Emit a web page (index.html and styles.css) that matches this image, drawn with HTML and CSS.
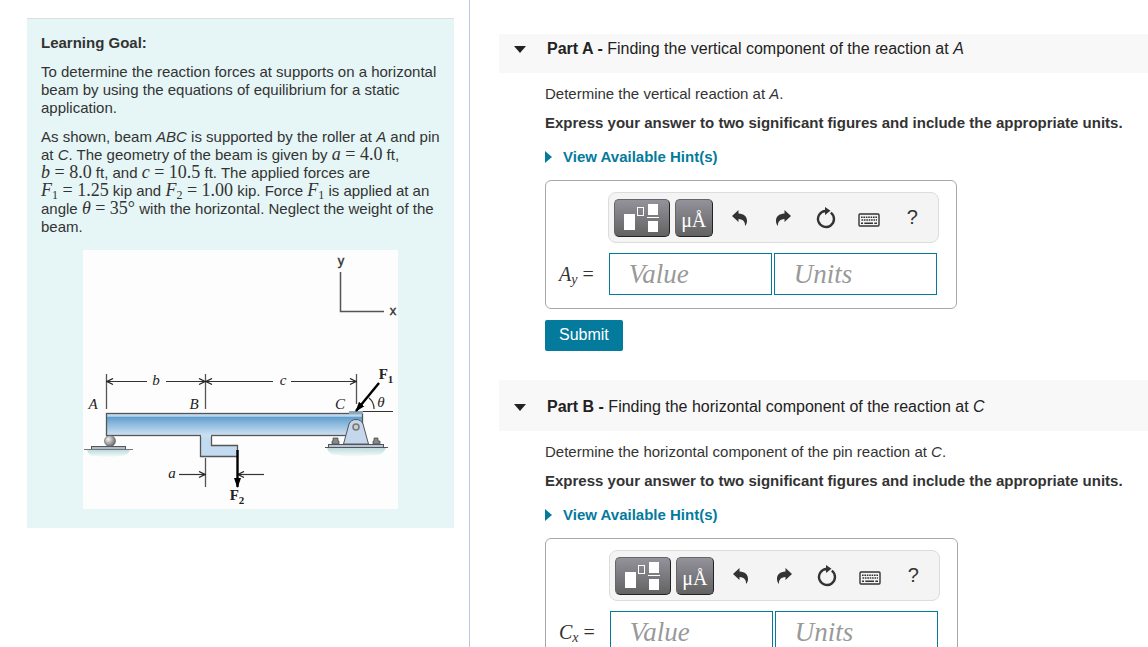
FILE: index.html
```html
<!DOCTYPE html>
<html lang="en">
<head>
    <meta charset="UTF-8">
    <meta name="viewport" content="width=device-width, initial-scale=1.0">
    <title>Reactions on a Horizontal Beam</title>
    <link rel="stylesheet" href="styles.css">
</head>
<body>
    <!-- Shared icons -->
    <svg class="icon-defs" aria-hidden="true">
        <symbol id="icon-undo" viewBox="0 0 16 16">
            <path d="M0 6 L6.5 0 V3.6 C12 3.8 15.2 7 15 11 C15 13 14.3 14.8 13 16 C13.4 12.3 11.5 9.2 6.5 9 V12 Z"/>
        </symbol>
        <symbol id="icon-redo" viewBox="0 0 16 16">
            <path d="M16 6 L9.5 0 V3.6 C4 3.8 .8 7 1 11 C1 13 1.7 14.8 3 16 C2.6 12.3 4.5 9.2 9.5 9 V12 Z"/>
        </symbol>
        <symbol id="icon-reset" viewBox="0 0 20 22">
            <path d="M14.8 5.6 A8 8 0 1 1 9.5 4" fill="none" stroke="currentColor" stroke-width="2.4"/>
            <path d="M9 0 L14.5 3.8 L9 8 Z"/>
        </symbol>
        <symbol id="icon-keyboard" viewBox="0 0 22 14">
            <rect x="1" y="1" width="20" height="12" rx="1" fill="none" stroke="currentColor" stroke-width="1.4"/>
            <path d="M3 4.2 H19 M3.5 7 H19" stroke="currentColor" stroke-width="1.6" stroke-dasharray="1.6 .8" fill="none"/>
            <path d="M3 10.2 H5 M6.3 10.2 H15 M16.3 10.2 H19" stroke="currentColor" stroke-width="1.5" fill="none"/>
        </symbol>
        <symbol id="icon-template" viewBox="0 0 36 30">
            <rect x="0" y="11" width="11" height="16" fill="#fff"/>
            <rect x="13.5" y="4.5" width="6" height="8" fill="none" stroke="#fff"/>
            <rect x="24" y="1" width="10" height="11" fill="#fff"/>
            <rect x="23" y="14" width="12" height="1" fill="#fff"/>
            <rect x="24" y="18" width="10" height="11" fill="#fff"/>
        </symbol>
    </svg>

    <div class="page">
        <!-- Problem statement -->
        <aside class="problem">
            <div class="goal">
                <p><strong>Learning Goal:</strong></p>
                <p>To determine the reaction forces at supports on a horizontal beam by using the equations of equilibrium for a static application.</p>
                <p>As shown, beam <i>ABC</i> is supported by the roller at <i>A</i> and pin at <i>C</i>. The geometry of the beam is given by <span class="math"><i>a</i> = 4.0</span> ft, <span class="math"><i>b</i> = 8.0</span> ft, and <span class="math"><i>c</i> = 10.5</span> ft. The applied forces are <span class="math"><i>F</i><sub>1</sub> = 1.25</span> kip and <span class="math"><i>F</i><sub>2</sub> = 1.00</span> kip. Force <span class="math"><i>F</i><sub>1</sub></span> is applied at an angle <span class="math"><i>θ</i> = 35°</span> with the horizontal. Neglect the weight of the beam.</p>

                <svg class="figure" viewBox="0 0 315 259" role="img" aria-label="Beam ABC with forces F1 and F2">
                    <defs>
                        <linearGradient id="beam" x1="0" y1="0" x2="0" y2="1">
                            <stop offset="0" stop-color="#c9dff0"/>
                            <stop offset=".13" stop-color="#b5d3eb"/>
                            <stop offset=".16" stop-color="#5f9dcb"/>
                            <stop offset=".5" stop-color="#90bcdf"/>
                            <stop offset="1" stop-color="#cfe1f2"/>
                        </linearGradient>
                        <linearGradient id="ground" x1="0" y1="0" x2="0" y2="1">
                            <stop offset="0" stop-color="#bcdcdc"/>
                            <stop offset="1" stop-color="#fdfdfd"/>
                        </linearGradient>
                        <radialGradient id="ball" cx=".35" cy=".35" r=".7">
                            <stop offset="0" stop-color="#f2f2f2"/>
                            <stop offset="1" stop-color="#666"/>
                        </radialGradient>
                        <marker id="tip" viewBox="0 0 8 8" refX="7" refY="4" markerWidth="8" markerHeight="8" markerUnits="userSpaceOnUse" orient="auto-start-reverse">
                            <path d="M1 1 L7 4 L1 7" fill="none" stroke="#222" stroke-width="1.3"/>
                        </marker>
                        <marker id="force" viewBox="0 0 10 8" refX="9" refY="4" markerWidth="10" markerHeight="8" markerUnits="userSpaceOnUse" orient="auto">
                            <path d="M0 0.5 L10 4 L0 7.5 Z" fill="#000"/>
                        </marker>
                    </defs>
                    <rect width="315" height="259" fill="#fdfdfd"/>

                    <!-- axes -->
                    <path d="M257.5 22 V61.5 H301" fill="none" stroke="#555" stroke-width="1.5"/>
                    <text class="axis" x="258" y="15">y</text>
                    <text class="axis" x="310" y="65">x</text>

                    <!-- ground shading under the supports -->
                    <path d="M4 200 H47 Q44 207 34 206 Q24 209 16 206 Q6 208 4 200 Z" fill="url(#ground)"/>
                    <path d="M244 198 H303 Q300 207 286 205 Q268 209 256 205 Q246 206 244 198 Z" fill="url(#ground)"/>

                    <!-- beam and bracket -->
                    <rect x="23.5" y="163.5" width="256" height="22" fill="url(#beam)" stroke="#555" stroke-width="1.3"/>
                    <path d="M117.5 185.5 V206.5 H154.5 V195.5 H128.5 V185.5" fill="#c3dbf0" stroke="#555" stroke-width="1.3"/>
                    <rect x="118" y="184" width="10" height="3" fill="#c8def1"/>
                    <rect x="266" y="161" width="14" height="3" fill="#8aa9bd"/>

                    <!-- roller at A -->
                    <rect x="8.5" y="196.5" width="34" height="3" fill="#a9bdcf" stroke="#555"/>
                    <path d="M1 199.5 H50" stroke="#777"/>
                    <circle cx="27" cy="191" r="5.5" fill="url(#ball)" stroke="#555" stroke-width=".6"/>

                    <!-- pin at C -->
                    <path d="M249 194 V191 H250 V188 H255 V191 H256 V194 Z M290 194 V191 H291 V188 H295 V191 H297 V194 Z" fill="#888" stroke="#444" stroke-width=".7"/>
                    <path d="M260.5 194 L266 174 Q268 169.5 273 169.5 Q278 169.5 280 174 L285.5 194 Z" fill="#c5d7ed" stroke="#555"/>
                    <rect x="245.5" y="194.5" width="55" height="3" fill="#b4c5dc" stroke="#555"/>
                    <path d="M242 197.5 H305" stroke="#555"/>
                    <circle cx="273" cy="177" r="3" fill="#ccc" stroke="#777" stroke-width="1.5"/>

                    <!-- dimensions -->
                    <path d="M23.5 124 V159 M122.5 124 V159 M273.5 124 V154 M122.5 208 V237" stroke="#555" stroke-width="1.3"/>
                    <g stroke="#333" stroke-width="1.2">
                        <path d="M64 131.5 H24" marker-end="url(#tip)"/>
                        <path d="M83 131.5 H122" marker-end="url(#tip)"/>
                        <path d="M190 131.5 H123" marker-end="url(#tip)"/>
                        <path d="M208 131.5 H273" marker-end="url(#tip)"/>
                        <path d="M96 224.5 H122" marker-end="url(#tip)"/>
                        <path d="M181 224.5 H155" marker-end="url(#tip)"/>
                    </g>
                    <path d="M280 161.5 H310 M286 148 Q291 152 291 159" fill="none" stroke="#333" stroke-width="1.2"/>

                    <!-- forces -->
                    <path d="M296 133 L273 161" stroke="#000" stroke-width="2.4" marker-end="url(#force)"/>
                    <path d="M154.5 200 V237" stroke="#000" stroke-width="2.4" marker-end="url(#force)"/>

                    <text class="dim" x="10" y="159">A</text>
                    <text class="dim" x="111" y="159">B</text>
                    <text class="dim" x="257" y="159">C</text>
                    <text class="dim" x="73" y="135">b</text>
                    <text class="dim" x="200" y="135">c</text>
                    <text class="dim" x="89" y="228">a</text>
                    <text class="dim" x="298" y="157">θ</text>
                    <text class="force" x="303" y="129">F<tspan class="index" dy="4">1</tspan></text>
                    <text class="force" x="154" y="250">F<tspan class="index" dy="4">2</tspan></text>
                </svg>
            </div>
        </aside>

        <!-- Question parts -->
        <main class="parts">
            <section class="part">
                <header class="part-header">
                    <button class="toggle" type="button" aria-label="Collapse Part A"></button>
                    <h2><b>Part A -</b> Finding the vertical component of the reaction at <i>A</i></h2>
                </header>
                <div class="part-body">
                    <p>Determine the vertical reaction at <i>A</i>.</p>
                    <p><strong>Express your answer to two significant figures and include the appropriate units.</strong></p>
                    <a class="hints" href="#hints-a">View Available Hint(s)</a>
                    <form class="part-form">
                        <div class="answer">
                            <div class="toolbar">
                                <button class="tool-dark template" type="button" aria-label="Templates"><svg><use href="#icon-template"/></svg></button>
                                <button class="tool-dark units" type="button" aria-label="Symbols">μÅ</button>
                                <button class="tool" type="button" aria-label="Undo"><svg class="arrow"><use href="#icon-undo"/></svg></button>
                                <button class="tool" type="button" aria-label="Redo"><svg class="arrow"><use href="#icon-redo"/></svg></button>
                                <button class="tool" type="button" aria-label="Reset"><svg class="reset"><use href="#icon-reset"/></svg></button>
                                <button class="tool" type="button" aria-label="Keyboard shortcuts"><svg class="keyboard"><use href="#icon-keyboard"/></svg></button>
                                <button class="tool" type="button" aria-label="Help">?</button>
                            </div>
                            <label class="math" for="value-a"><i>A<sub>y</sub></i> =</label>
                            <div class="fields">
                                <input id="value-a" type="text" placeholder="Value">
                                <input type="text" placeholder="Units" aria-label="Units">
                            </div>
                        </div>
                        <button class="submit" type="submit">Submit</button>
                    </form>
                </div>
            </section>

            <section class="part">
                <header class="part-header">
                    <button class="toggle" type="button" aria-label="Collapse Part B"></button>
                    <h2><b>Part B -</b> Finding the horizontal component of the reaction at <i>C</i></h2>
                </header>
                <div class="part-body">
                    <p>Determine the horizontal component of the pin reaction at <i>C</i>.</p>
                    <p><strong>Express your answer to two significant figures and include the appropriate units.</strong></p>
                    <a class="hints" href="#hints-b">View Available Hint(s)</a>
                    <form class="part-form">
                        <div class="answer">
                            <div class="toolbar">
                                <button class="tool-dark template" type="button" aria-label="Templates"><svg><use href="#icon-template"/></svg></button>
                                <button class="tool-dark units" type="button" aria-label="Symbols">μÅ</button>
                                <button class="tool" type="button" aria-label="Undo"><svg class="arrow"><use href="#icon-undo"/></svg></button>
                                <button class="tool" type="button" aria-label="Redo"><svg class="arrow"><use href="#icon-redo"/></svg></button>
                                <button class="tool" type="button" aria-label="Reset"><svg class="reset"><use href="#icon-reset"/></svg></button>
                                <button class="tool" type="button" aria-label="Keyboard shortcuts"><svg class="keyboard"><use href="#icon-keyboard"/></svg></button>
                                <button class="tool" type="button" aria-label="Help">?</button>
                            </div>
                            <label class="math" for="value-b"><i>C<sub>x</sub></i> =</label>
                            <div class="fields">
                                <input id="value-b" type="text" placeholder="Value">
                                <input type="text" placeholder="Units" aria-label="Units">
                            </div>
                        </div>
                        <button class="submit" type="submit">Submit</button>
                    </form>
                </div>
            </section>
        </main>
    </div>
</body>
</html>
```
FILE: styles.css
```css
* {
    box-sizing: border-box;
}
body {
    margin: 0;
    font-family: "Liberation Sans", Arial, sans-serif;
    font-size: 15px;
    line-height: 18px;
    color: #333;
    background: white;
}
p {
    margin: 0 0 11px;
}
.icon-defs {
    position: absolute;
    width: 0;
    height: 0;
}
.page {
    display: grid;
    grid-template-columns: 470px 1fr;
    height: 100vh;
}
.problem,
.parts {
    overflow-y: auto;
    scrollbar-width: none;
}

/* Problem statement */
.problem {
    padding: 18px 15px 18px 27px;
    border-right: 1px solid #b9c6dc;
}
.goal {
    padding: 15px 13px 19px 14px;
    background: #e6f6f6;
    border-top: 1px solid #dcdfe0;
}
.math {
    font-family: "Liberation Serif", "Times New Roman", serif;
    font-size: 18px;
    line-height: 0;
    white-space: nowrap;
}
.math sub {
    font-size: 12px;
    line-height: 0;
    vertical-align: -3px;
}
.figure {
    display: block;
    width: 315px;
    margin: 14px 0 0 42px;
}
.axis {
    font-size: 13px;
    text-anchor: middle;
    fill: #333;
    stroke: #333;
    stroke-width: .4px;
}
.dim,
.force {
    font-family: "Liberation Serif", "Times New Roman", serif;
    font-size: 15px;
    text-anchor: middle;
    fill: #222;
}
.dim {
    font-style: italic;
}
.force {
    font-weight: bold;
}
.index {
    font-size: 11px;
}

/* Parts */
.parts {
    padding: 34px 0 0 29px;
}
.part {
    margin-bottom: 29px;
}
.part-header {
    display: flex;
    align-items: center;
    gap: 20px;
    padding: 18px 14px 15px;
    background: #f8f8f8;
}
.part:first-child .part-header {
    padding-top: 6px;
}
.part-header h2 {
    margin: 0;
    font-size: 16px;
    font-weight: normal;
    color: #222;
}
.toggle {
    width: 14px;
    height: 18px;
    padding: 0 1px;
    border: none;
    background: none;
}
.toggle::before {
    content: "";
    display: block;
    border: 6px solid transparent;
    border-top: 7px solid #222;
    border-bottom: none;
}
.part-body {
    padding: 12px 14px 0 46px;
}
.hints {
    display: flex;
    align-items: center;
    gap: 11px;
    margin-top: 16px;
    font-weight: bold;
    color: #047a9c;
    text-decoration: none;
}
.hints::before {
    content: "";
    border: 6px solid transparent;
    border-left: 7px solid #047a9c;
    border-right: none;
}
.part-form {
    display: flex;
    flex-direction: column;
    align-items: flex-start;
    gap: 11px;
    margin-top: 14px;
}
.answer {
    display: grid;
    grid-template-columns: auto auto;
    align-items: center;
    row-gap: 10px;
    padding: 11px 19px 13px 13px;
    border: 1px solid #a8a8a8;
    border-radius: 6px;
}
.answer label {
    padding-right: 15px;
    font-size: 20px;
    line-height: 24px;
}
.answer sub {
    font-size: 14px;
}
.toolbar {
    grid-column: 2;
    display: flex;
    align-items: center;
    margin: 0 -2px 0 -1px;
    height: 51px;
    padding: 0 4px 0 5px;
    background: #f4f4f4;
    border: 1px solid #dcdcdc;
    border-radius: 8px;
}
.tool-dark {
    display: flex;
    align-items: center;
    justify-content: center;
    height: 38px;
    margin-right: 5px;
    padding: 0;
    color: white;
    background: linear-gradient(#94929b, #626262);
    border: 1px solid #222;
    border-top-color: #666;
    border-left-color: #666;
    border-radius: 5px;
}
.template {
    width: 56px;
}
.template svg {
    width: 36px;
    height: 30px;
}
.units {
    width: 38px;
    margin-right: 6px;
    padding-top: 6px;
    font-family: "Liberation Serif", "Times New Roman", serif;
    font-size: 20px;
}
.tool {
    display: flex;
    flex: 1;
    align-items: center;
    justify-content: center;
    padding: 0;
    font-family: "Liberation Sans", Arial, sans-serif;
    font-size: 20px;
    color: #333;
    background: none;
    border: none;
}
.tool svg {
    fill: #333;
}
.arrow {
    width: 16px;
    height: 16px;
}
.reset {
    width: 20px;
    height: 22px;
}
.keyboard {
    width: 22px;
    height: 14px;
    margin-top: 4px;
}
.fields {
    display: flex;
    gap: 2px;
}
.fields input {
    width: 163px;
    height: 42px;
    padding: 0 19px;
    font-family: "Liberation Serif", "Times New Roman", serif;
    font-size: 27px;
    font-style: italic;
    border: 1px solid #047a9c;
    border-radius: 0;
}
.fields input::placeholder {
    color: #999;
}
.submit {
    height: 31px;
    padding: 0 14px 2px;
    font-family: "Liberation Sans", Arial, sans-serif;
    font-size: 16px;
    color: white;
    background: #047a9c;
    border: none;
    border-radius: 2px;
}
```
